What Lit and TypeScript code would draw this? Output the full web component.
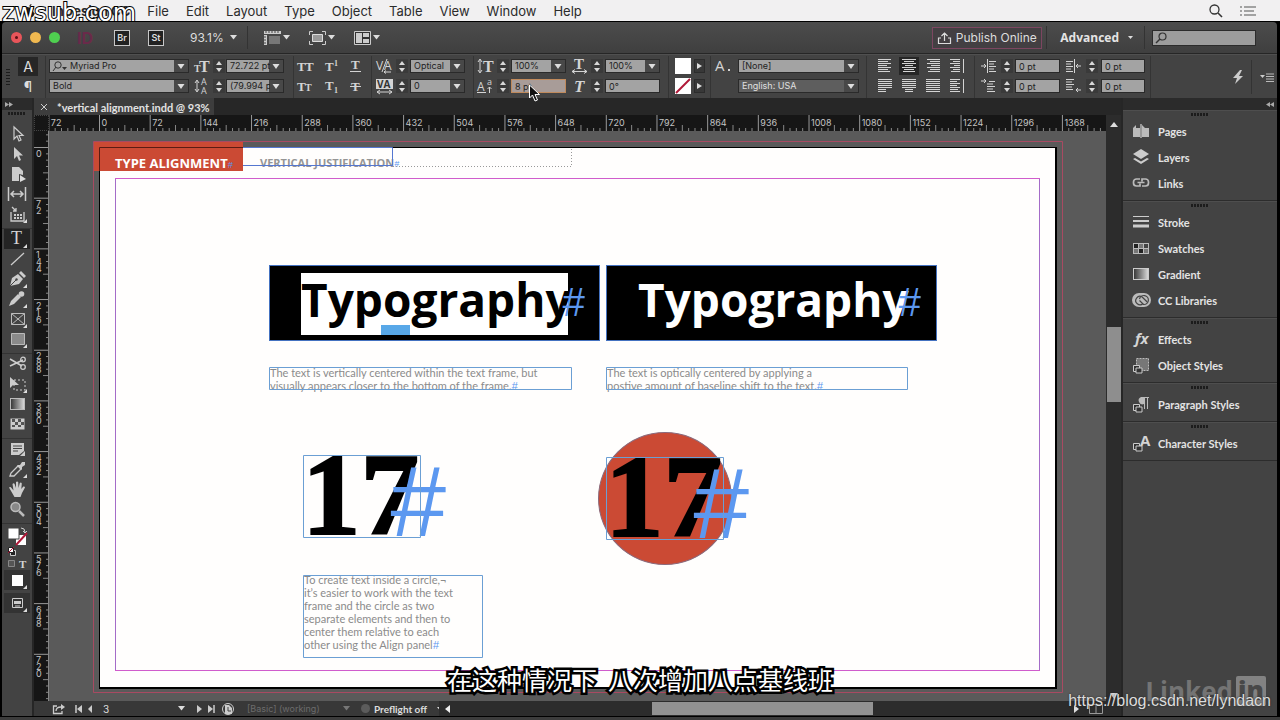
import { LitElement, html, svg, css, nothing } from "lit";
import { customElement } from "lit/decorators.js";
import { classMap } from "lit/directives/class-map.js";

const icon = (w: number, h: number, body: unknown) =>
  html`<svg class="icon" width=${w} height=${h} viewBox="0 0 ${w} ${h}" aria-hidden="true">${body}</svg>`;

const caret = icon(7, 5, svg`<path d="M0 0h7L3.500 4.500z" fill="#ddd"/>`);

/* ---------- Character panel glyphs ---------- */
const L = "#d4d4d4";
const glyph = {
  size: icon(16, 16, svg`<text x="5" y="14" class="serif" font-size="16">T</text><text x="0" y="14" class="serif" font-size="10">T</text>`),
  leading: icon(16, 16, svg`<text x="7" y="7" class="sans" font-size="9">A</text><text x="7" y="16" class="sans" font-size="9">A</text><path d="M3 3v10M1 5l2-3 2 3M1 11l2 3 2-3" stroke=${L} fill="none"/>`),
  caps: icon(17, 14, svg`<text x="0" y="12" class="serif" font-size="13">T</text><text x="8" y="12" class="serif" font-size="13">T</text>`),
  smallCaps: icon(17, 14, svg`<text x="0" y="12" class="serif" font-size="13">T</text><text x="8" y="12" class="serif" font-size="10">T</text>`),
  sup: icon(14, 14, svg`<text x="0" y="12" class="serif" font-size="13">T</text><text x="9" y="7" class="serif" font-size="8">1</text>`),
  sub: icon(14, 14, svg`<text x="0" y="11" class="serif" font-size="13">T</text><text x="9" y="14" class="serif" font-size="8">1</text>`),
  under: icon(12, 14, svg`<text x="1" y="10" class="serif" font-size="13">T</text><path d="M0 12.500h11" stroke=${L}/>`),
  strike: icon(12, 14, svg`<text x="1" y="12" class="serif" font-size="13">T</text><path d="M0 7.500h11" stroke=${L}/>`),
  kern: icon(17, 16, svg`<text x="0" y="12" class="sans" font-size="12">V</text><text x="8" y="12" class="sans" font-size="12">A</text><path d="M6 14L11 1M8 14h7M10 12.500L8 14l2 1.500" stroke=${L} fill="none"/>`),
  track: icon(17, 16, svg`<path d="M0 1h17v10H0z" fill=${L}/><text x="1" y="10" class="dark" font-size="10">VA</text><path d="M1 14h15M4 12l-3 2 3 2M13 12l3 2-3 2" stroke=${L} fill="none"/>`),
  vscale: icon(17, 16, svg`<text x="6" y="14" class="serif" font-size="16">T</text><path d="M3 2v12M1 4l2-3 2 3M1 12l2 3 2-3" stroke=${L} fill="none"/>`),
  shift: icon(17, 16, svg`<text x="0" y="13" class="sans" font-size="12">A</text><path d="M0 14.500h9M12.500 9v6M10.500 11l2-2 2 2" stroke=${L} fill="none"/><text x="10" y="7" class="sans" font-size="9">a</text>`),
  hscale: icon(17, 16, svg`<text x="3" y="11" class="serif" font-size="15">T</text><path d="M1 13.500h15M4 11.500l-3 2 3 2M13 11.500l3 2-3 2" stroke=${L} fill="none"/>`),
  skew: icon(17, 16, svg`<text x="3" y="14" class="serif it" font-size="17">T</text>`),
  charStyle: icon(18, 16, svg`<text x="0" y="13" class="sans" font-size="15">A</text><path d="M13 11h2v2h-2z" fill=${L}/>`),
};

const lines = (rows: number[][], extra: unknown = nothing) =>
  icon(16, 14, svg`${rows.map((r, i) => svg`<path d="M${r[0]} ${0.5 + i * 2}h${r[1]}" stroke=${L} stroke-width="1"/>`)}${extra}`);
const aligns = [
  ["Align left", lines([[1, 13], [1, 10], [1, 13], [1, 9], [1, 13], [1, 10], [1, 12]])],
  ["Align center", lines([[1, 14], [3, 10], [1, 14], [4, 8], [1, 14], [3, 10], [2, 12]])],
  ["Align right", lines([[2, 13], [5, 10], [2, 13], [6, 9], [2, 13], [5, 10], [3, 12]])],
  ["Align towards spine", lines([[1, 10], [4, 7], [1, 10], [5, 6], [1, 10], [4, 7], [2, 9]], svg`<path d="M14.500 0v14" stroke=${L}/>`)],
  ["Justify left", lines([[1, 14], [1, 14], [1, 14], [1, 14], [1, 14], [1, 8], [1, 8]])],
  ["Justify center", lines([[1, 14], [1, 14], [1, 14], [1, 14], [1, 14], [4, 8], [4, 8]])],
  ["Justify all", lines([[1, 14], [1, 14], [1, 14], [1, 14], [1, 14], [1, 14], [1, 14]])],
  ["Align away from spine", lines([[1, 10], [1, 7], [1, 10], [1, 7], [1, 10], [1, 8], [1, 10]], svg`<path d="M14.500 0v14" stroke=${L}/>`)],
] as const;

const indent = (arrow: string, x: number, bar: number) =>
  icon(15, 14, svg`<path d="M${x} 2.500h7M${x} 5h5M${x} 7.500h7M${x} 10h5M${x} 12.500h7" stroke=${L} stroke-width="1.200"/><path d="M${bar} 0v14" stroke=${L}/><path d=${arrow} stroke=${L} fill="none"/>`);
const indents = {
  left: indent("M0 7h5M3 5l2 2-2 2", 8, 6.5),
  right: indent("M15 7h-5M12 5l-2 2 2 2", 0, 8.5),
  first: icon(15, 14, svg`<path d="M0 2h5M3 0l2 2-2 2M8 2.500h6M6 5h6M6 7.500h8M6 10h6M6 12.500h8" stroke=${L} fill="none"/>`),
  last: icon(15, 14, svg`<path d="M0 .500h8M0 3h6M0 5.500h8M0 8h6M0 10.500h7M15 11h-5M12 9l-2 2 2 2" stroke=${L} fill="none"/>`),
};

/* ---------- Tools ---------- */
const corner = svg`<path d="M22 19v-4l-4 4z" fill="#ddd"/>`;
type Tool = { name: string; art: unknown; on?: boolean };
const toolGroups: Tool[][] = [
  [
    { name: "Selection", art: svg`<path d="M9 3v12l3-3 2 5 2-1-2-4.500h4z" fill="none" stroke="#ccc" stroke-width="1.200"/>` },
    { name: "Direct Selection", art: svg`<path d="M9 3v12l3-3 2 5 2-1-2-4.500h4z" fill="#ccc"/>` },
    { name: "Page", art: svg`<path d="M7 3h7l4 4v4l-4-1v7H7z" fill="#ccc"/><path d="M15 11v7l6-3z" fill="#ddd"/>` },
    { name: "Gap", art: svg`<path d="M3.500 3v14M20.500 3v14M6 10h12M9 7l-3 3 3 3M15 7l3 3-3 3" stroke="#ccc" stroke-width="1.500" fill="none"/>` },
    { name: "Content Collector", art: svg`<path d="M6 8v9h13V8M7 3l4 4M11 4v3H8" stroke="#ccc" stroke-width="1.300" fill="none"/><path d="M9 10h2v2H9zM12 10h2v2h-2zM15 10h2v2h-2zM9 13h2v2H9zM12 13h2v2h-2zM15 13h2v2h-2z" fill="#ccc"/>${corner}` },
  ],
  [
    { name: "Type", on: true, art: svg`<text x="6" y="15" class="serif thin" font-size="18">T</text>${corner}` },
    { name: "Line", art: svg`<path d="M6 16L19 4" stroke="#ccc" stroke-width="1.300"/>` },
    { name: "Pen", art: svg`<path d="M5 17l2-8 6-4 5 5-4 5z" fill="#ccc"/><path d="M14 4l2-2 5 5-2 2z" fill="#ccc"/><path d="M5 17l6-6" stroke="#444"/><circle cx="11.500" cy="10.500" r="1.200" fill="#444"/>${corner}` },
    { name: "Pencil", art: svg`<path d="M4 17l2-5 7-7 3 3-7 7z" fill="#ccc"/><circle cx="16.500" cy="5" r="2.800" fill="#ccc"/>${corner}` },
    { name: "Rectangle Frame", art: svg`<path d="M6.500 4.500h13v11h-13zM6.500 4.500l13 11M19.500 4.500l-13 11" stroke="#bbb" fill="none"/>${corner}` },
    { name: "Rectangle", art: svg`<path d="M6.500 4.500h13v11h-13z" fill="#8a8a8a" stroke="#bbb"/>${corner}` },
  ],
  [
    { name: "Scissors", art: svg`<path d="M5 5l12 7M5 12l13-6" stroke="#ccc" stroke-width="1.600"/><circle cx="18" cy="5.500" r="2.300" fill="none" stroke="#ccc" stroke-width="1.300"/><circle cx="18" cy="13" r="2.300" fill="none" stroke="#ccc" stroke-width="1.300"/>` },
    { name: "Free Transform", art: svg`<path d="M5 3v11l3-3h6z" fill="#ccc"/><path d="M9 6h11v10H9z" fill="none" stroke="#ccc" stroke-dasharray="2 2"/>${corner}` },
    { name: "Gradient Swatch", art: svg`<rect x="5.500" y="4.500" width="14" height="11" fill="url(#grad)" stroke="#bbb"/>` },
    { name: "Gradient Feather", art: svg`<rect x="5.500" y="4.500" width="14" height="11" fill="#ccc"/><path d="M7 5h3v3H7zM13 5h3v3h-3zM10 8h3v3h-3zM16 8h3v3h-3zM7 11h3v2H7zM13 11h3v2h-3z" fill="#555"/>` },
  ],
  [
    { name: "Note", art: svg`<path d="M6 4h13v8l-5 4H6z" fill="#ccc"/><path d="M8 7h9M8 9.500h9M8 12h5" stroke="#444"/><path d="M15 17l5-5v5z" fill="#ccc"/>` },
    { name: "Eyedropper", art: svg`<path d="M5 17l1-3 7-7 3 3-7 7z" fill="none" stroke="#ccc" stroke-width="1.300"/><path d="M12 6l3 0 2-3 3 0 0 3-3 2 0 3z" fill="#ccc"/>${corner}` },
    { name: "Hand", art: svg`<path d="M4 8.500q1.500-1 2.500.5l2 2.500L7.500 5q1.500-1.500 2.300.5L11 9V3q1.200-1.200 2.200 0L13.500 9l1.300-5q1.300-1 2 .5L16.300 10l2-2.500q1.500-.5 1.700 1L17 14l-1.500 4H9.500z" fill="#ccc"/>` },
    { name: "Zoom", art: svg`<circle cx="10.500" cy="8" r="4.500" fill="#888" stroke="#bbb" stroke-width="1.500"/><path d="M14 12l5 5" stroke="#bbb" stroke-width="2.500"/>` },
  ],
];

/* ---------- Side panels ---------- */
const stylesBadge = svg`<path d="M1.500 9.500h6v6h-6z" fill="#333" stroke="#ccc"/><path d="M4 12h6v5H4z" fill="#333" stroke="#ccc"/>`;
const panels: { name: string; art: unknown }[][] = [
  [
    { name: "Pages", art: svg`<path d="M1 6l3-3v3h4v9H1zM10 3l3 3h4v9h-7z" fill="#bbb"/><path d="M9 2v14" stroke="#eee" stroke-width="1"/>` },
    { name: "Layers", art: svg`<path d="M9 1l8 5-8 5-8-5z" fill="#ccc"/><path d="M1 11l8 5 8-5-2-1-6 3.500L3 10z" fill="#ccc"/>` },
    { name: "Links", art: svg`<path d="M8 5H4.500a3 3 0 0 0-3 3v1a3 3 0 0 0 3 3H8V9.500M10 12h3.500a3 3 0 0 0 3-3V8a3 3 0 0 0-3-3H10v2.500M5.500 8.500h7" fill="none" stroke="#bbb" stroke-width="1.700"/>` },
  ],
  [
    { name: "Stroke", art: svg`<path d="M1 3.500h16" stroke="#ccc"/><path d="M1 8h16" stroke="#ccc" stroke-width="2"/><path d="M1 13h16" stroke="#ccc" stroke-width="3"/>` },
    { name: "Swatches", art: svg`<path d="M1 4h16v11H1z" fill="#bbb"/><path d="M2 5h4v4H2zM7 10h4v4H7z" fill="#222"/><path d="M7 5h4v4H7zM2 10h4v4H2zM12 10h4v4h-4z" fill="#777"/><path d="M12 5h4v4h-4z" fill="#444"/>` },
    { name: "Gradient", art: svg`<rect x="1.500" y="3.500" width="15" height="11" fill="url(#grad)" stroke="#ccc"/>` },
    { name: "CC Libraries", art: svg`<rect x="0" y="2" width="19" height="14" rx="7" fill="#bbb"/><path d="M11 12.500a4.200 4.200 0 1 1-.8-6.500l5 5" fill="none" stroke="#444" stroke-width="1.200"/><path d="M7.500 8a4.500 4.500 0 1 1 4 5.500l-4-4" fill="none" stroke="#444" stroke-width="1.200"/>` },
  ],
  [
    { name: "Effects", art: svg`<text x="3" y="14" class="sans it" font-size="15">fx</text>` },
    { name: "Object Styles", art: svg`<rect x="4.500" y="2.500" width="12" height="12" fill="#777" stroke="#bbb" stroke-dasharray="2 1"/>${stylesBadge}` },
  ],
  [{ name: "Paragraph Styles", art: svg`<path d="M9 2h8v1h-1v11h-1V3h-2v11h-1V9a3.500 3.500 0 0 1-3-7z" fill="#bbb"/>${stylesBadge}` }],
  [{ name: "Character Styles", art: svg`<text x="8" y="12" class="sans" font-size="15">A</text>${stylesBadge}` }],
];

/* ---------- Rulers: 72 pt is 50.68 px at this zoom ---------- */
const STEP = 50.68;
const hRuler = () => {
  const out = [];
  for (let i = -1; i <= 20; i++) {
    const x = 50.5 + i * STEP;
    out.push(svg`<path d="M${x} 0v16" stroke="#999"/>`);
    if (i < 20) out.push(svg`<text x=${x + 2} y="11" class="tick">${Math.abs(i * 72)}</text>`);
    for (let k = 1; k < 8; k++) out.push(svg`<path d="M${x + (k * STEP) / 8} ${k === 4 ? 10 : 13}v6" stroke="#888"/>`);
  }
  return out;
};
const vRuler = () => {
  const out = [];
  for (let i = -1; i <= 11; i++) {
    const y = 16.5 + i * STEP;
    out.push(svg`<path d="M0 ${y}h15" stroke="#999"/>`);
    if (i >= 0 && i < 11)
      out.push(...String(i * 72).split("").map((d, n) => svg`<text x="2" y=${y + 9 + n * 7} class="tick">${d}</text>`));
    for (let k = 1; k < 8; k++) out.push(svg`<path d="M${k === 4 ? 9 : 12} ${y + (k * STEP) / 8}h6" stroke="#888"/>`);
  }
  return out;
};

const combo = (label: string, value: string, cls = "") =>
  html`<select class="combo ${cls}" aria-label=${label}><option>${value}</option></select>`;
const stepper = (label: string) => html`<span class="stepper">
  <button aria-label="Increase ${label}"><i class="up"></i></button>
  <button aria-label="Decrease ${label}"><i class="down"></i></button>
</span>`;
const field = (label: string, value: string, cls = "") =>
  html`<input class="field ${cls}" aria-label=${label} .value=${value} />`;
const glyphButton = (label: string, art: unknown) => html`<button class="plain" aria-label=${label}>${art}</button>`;

@customElement("app-root")
export class AppRoot extends LitElement {
  static styles = css`
    :host { display: block; }
    * { box-sizing: border-box; }
    button, select, input { font: inherit; color: inherit; margin: 0; border: 0; padding: 0; border-radius: 0; }
    button { background: none; display: inline-flex; align-items: center; justify-content: center; }
    .icon { display: block; flex: none; overflow: visible; }
    .serif { font-family: "Liberation Serif", serif; font-weight: 700; fill: #d4d4d4; }
    .thin { font-weight: 400; }
    .sans { font-family: "Open Sans", sans-serif; fill: #d4d4d4; }
    .dark { font-family: "Open Sans", sans-serif; font-weight: 700; fill: #333; }
    .it { font-style: italic; }
    .tick { font-family: "Inter", sans-serif; font-size: 9px; fill: #c4c4c4; }

    .screen {
      position: relative; display: flex; flex-direction: column; height: 100vh; overflow: hidden;
      padding: 0 3px 4px 2px; background: linear-gradient(#000, #000) top / 100% calc(100% - 3px) no-repeat #3c3c3c;
      font-family: "Inter", sans-serif; font-size: 10px; color: #ddd;
    }

    .menubar { flex: none; display: flex; align-items: center; gap: 17px; height: 21px; margin: 0 -3px 1px -2px; padding: 0 24px; background: #f1f0f1; color: #2b2b2b; font-size: 13px; }
    .menubar button { flex: none; }
    .brand { font-weight: 700; }
    .menubar .push { margin-left: auto; }

    .appbar { flex: none; display: flex; align-items: center; height: 32px; padding: 0 21px 0 9px; background: linear-gradient(#4c4c4c, #3f3f3f); border-bottom: 1px solid #262626; border-radius: 4px 4px 0 0; }
    .lights { display: flex; gap: 8px; }
    .light { width: 11px; height: 11px; border-radius: 50%; }
    .red { background: #e8555a; } .yellow { background: #f0b850; } .green { background: #4fcf50; }
    .red::after { content: ""; display: block; width: 3px; height: 3px; margin: 4px; border-radius: 50%; background: #5a1015; }
    .logo { width: 18px; margin-left: 17px; font-size: 16px; line-height: 18px; font-weight: 700; color: #6a2a4a; }
    .bridge { width: 16px; height: 16px; border: 1px solid #c8c8c8; background: #222; color: #ddd; font-size: 9px; font-weight: 600; margin-left: 19px; }
    .bridge + .bridge { margin-left: 18px; }
    .zoom { margin-left: 26px; font-size: 12px; gap: 6px; }
    .rule { flex: none; width: 1px; align-self: stretch; background: #333; margin: 4px 0; }
    .views { display: flex; gap: 19px; padding-left: 15px; }
    .zoom + .rule { margin-left: 10px; }
    .views button { gap: 2px; }
    .publish { height: 22px; width: 110px; gap: 5px; margin: 0 4px 0 auto; border: 1px solid #7c4660; color: #ddd; font-size: 12px; background: #433f42; }
    .workspace { font-family: "Open Sans", sans-serif; font-weight: 700; font-size: 12px; gap: 9px; padding: 0 14px 0 13px; margin-right: -3px; color: #e4e4e4; }
    .search { display: flex; align-items: center; width: 104px; height: 16px; margin-left: 7px; background: #9d9d9d; border: 1px solid #2c2c2c; padding-left: 2px; }
    .search input { flex: 1; min-width: 0; background: none; }

    .control { flex: none; display: flex; height: 44px; padding-top: 2px; background: #434343; border-top: 1px solid #505050; }
    .group { flex: none; display: grid; grid-template-rows: 20px 20px; align-items: center; border-left: 1px solid #343434; margin-top: -1px; }
    .handle { flex: none; width: 4px; height: 18px; margin: 12px 0 0 4px; background: repeating-linear-gradient(#1c1c1c 0 1px, #434343 1px 3px); }
    .modes { grid-template-columns: 20px; padding-left: 8px; margin-right: 7px; border: 0; }
    .modes button { height: 19px; color: #ddd; font-size: 14px; }
    .modes .on, .cell.on { background: #262626; }
    .font { grid-template-columns: 140px 5px 16px 3px 12px 1px 58px; padding-left: 3px; margin-right: 9px; }
    .case { grid-template-columns: 16px 13px 12px; column-gap: 12px; padding-left: 3px; margin-right: 9px; }
    .kern { grid-template-columns: 17px 3px 12px 2px 55px; padding-left: 4px; margin-right: 8px; }
    .scale { grid-template-columns: 17px 3px 12px 2px 55px 5px 17px 3px 12px 2px 55px; padding-left: 3px; margin-right: 8px; }
    .paint { grid-template-columns: 16px 3px 11px; padding-left: 6px; margin-right: 5px; }
    .named { grid-template-columns: 18px 5px 121px; padding-left: 4px; margin-right: 7px; }
    .align { grid-template-columns: repeat(4, 24px); padding-left: 6px; margin-right: 5px; }
    .indents { grid-template-columns: 15px 5px 12px 2px 45px 6px 15px 5px 12px 3px 44px; padding-left: 6px; margin-right: 5px; }
    .cell { height: 18px; width: 20px; justify-self: center; }
    .tail { flex: 1; display: flex; align-items: center; justify-content: flex-end; gap: 8px; border-left: 1px solid #343434; padding-right: 3px; margin-top: -1px; }
    .combo, .field { width: 100%; height: 14px; border: 1px solid #2a2a2a; background-color: #a3a3a3; color: #222; font-size: 9px; line-height: 12px; padding: 0 0 0 3px; }
    .combo {
      appearance: none; padding-right: 13px;
      background-image: url("data:image/svg+xml,%3Csvg xmlns='http://www.w3.org/2000/svg' width='14' height='12'%3E%3Cpath d='M0 0h14v12H0z' fill='%23484848'/%3E%3Cpath d='M3.500 4h7L7 9z' fill='%23ddd'/%3E%3C/svg%3E");
      background-repeat: no-repeat; background-position: right top;
    }
    .lens { padding-left: 20px; }
    .mid { background-color: #5e5e5e; color: #e0e0e0; }
    .active { border: 1px solid #c08a5c; background-color: #a89c98; }
    .withlens { display: grid; align-items: center; }
    .withlens > * { grid-area: 1 / 1; }
    .withlens .icon { margin-left: 3px; z-index: 1; pointer-events: none; }
    .stepper { display: flex; flex-direction: column; height: 14px; background: #3a3a3a; }
    .stepper button { height: 7px; width: 100%; }
    .up, .down { border: 3px solid transparent; }
    .up { border-top: 0; border-bottom: 4px solid #d8d8d8; }
    .down { border-bottom: 0; border-top: 4px solid #d8d8d8; }
    .plain { justify-content: flex-start; }
    .chip { width: 16px; height: 16px; background: #fff; }
    .flyout { height: 14px; background: #383838; border: 1px solid #2c2c2c; }

    .main { flex: 1; min-height: 0; display: flex; background: #262626; }
    .tools { flex: none; width: 30px; display: flex; flex-direction: column; background: #434343; }
    .strip { flex: none; height: 12px; background: #2b2b2b; display: flex; align-items: center; padding: 0 3px; }
    .strip.end { justify-content: flex-end; }
    .grip { width: 18px; height: 3px; margin: 2px auto 0; background: repeating-linear-gradient(90deg, #1c1c1c 0 2px, #434343 2px 3px); }
    .toolset { display: flex; flex-direction: column; padding-bottom: 4px; border-bottom: 1px solid #333; }
    .toolset.first { margin-top: 9px; }
    .toolset button { height: 20px; width: 26px; margin-left: 2px; }
    .toolset .on { background: #242424; }
    .colors { padding: 0 0 0 3px; }
    .modebtn { height: 20px; width: 26px; margin: 0 2px 3px; background: #333; }

    .doc { flex: 1; min-width: 0; display: grid; grid-template: 17px 16px minmax(0, 1fr) 15px / 15px minmax(0, 1fr) 15px; margin-left: 2px; background: #262626; }
    .tabs { grid-column: 1 / -1; background: #272727; display: flex; }
    .tab { display: flex; align-items: center; gap: 10px; width: 180px; padding: 1px 0 0 7px; background: #3d3d3d; color: #e2e2e2; font-family: "Lato", sans-serif; font-size: 11px; font-weight: 700; white-space: nowrap; }
    .origin { background: #161616; border: 1px dotted #444; }
    .hruler, .vruler { background: #161616; overflow: hidden; }
    .vruler { border-right: 1px solid #888; }
    .hruler svg, .vruler svg { display: block; }
    .vscroll { grid-row: 2 / 4; grid-column: 3; background: #2c2c2c; display: flex; flex-direction: column; align-items: center; padding: 7px 0 2px; }
    .vthumb { width: 14px; height: 75px; background: #8e8e8e; margin-top: 200px; }
    .vscroll .bottom { margin-top: auto; }
    .status { grid-column: 1 / -1; display: flex; align-items: center; background: #383838; min-width: 0; }
    .info { flex: none; width: 405px; display: grid; grid-template-columns: 19px 22px 12px 16px 75px 18px 12px 14px 25px 96px 18px 13px 60px; align-items: center; height: 15px; }
    .dim { color: #6c6c6c; font-size: 9px; }
    .preflight { font-family: "Lato", sans-serif; font-weight: 700; font-size: 10px; white-space: nowrap; display: flex; gap: 10px; align-items: center; }
    .hscroll { flex: 1; height: 15px; display: flex; align-items: center; background: #2c2c2c; padding: 0 15px 0 6px; }
    .hthumb { width: 221px; height: 13px; background: #929292; margin: 0 auto 0 202px; }

    .board { position: relative; overflow: hidden; background: #5a5a5a; color: #8b8b8b; font-family: "Open Sans", sans-serif; }
    .board > * { position: absolute; white-space: nowrap; }
    .page { left: 50px; top: 16px; width: 958px; height: 542px; background: #fffefd; border: 1px solid #000; border-width: 1px 2px 2px 1px; }
    .banner { left: 45px; top: 10px; width: 149px; height: 30px; background: #cb4a34; }
    .guides { left: 0; top: 0; }
    .head { top: 24px; font-size: 13px; line-height: 16px; font-weight: 700; }
    .h1 { left: 66px; color: #fff; }
    .h2 { left: 211px; color: #959595; font-size: 11px; }
    .mark { color: #5c98f0; font-family: "Liberation Sans", sans-serif; font-style: italic; font-weight: 400; }
    .head .mark { font-size: 9px; }
    .block { top: 134px; width: 331px; height: 76px; background: #000; border: 1px solid #4472c0; color: #fff; }
    .b1 { left: 220px; } .b2 { left: 557px; }
    .sel { left: 252px; top: 142px; width: 267px; height: 62px; background: #fff; }
    .type { top: 136px; font-size: 46px; line-height: 64px; font-weight: 700; }
    .t1 { left: 252px; color: #000; } .t2 { left: 589px; color: #fff; }
    .m1, .m2 { top: 148px; font-size: 40px; line-height: 46px; }
    .m1 { left: 513px; } .m2 { left: 849px; }
    .space { left: 332px; top: 194px; width: 29px; height: 10px; background: #58a8e8; }
    .copy { font-size: 11px; line-height: 13px; margin: 0; font-family: "Lato", sans-serif; }
    .c1 { left: 221px; top: 235px; } .c2 { left: 558px; top: 235px; } .c3 { left: 255px; top: 442px; }
    .disc { left: 549px; top: 301px; width: 134px; height: 133px; border-radius: 50%; background: #cb4a34; border: 1px solid #8a6a7c; }
    .num { font-family: "Liberation Serif", serif; font-weight: 700; font-size: 117px; line-height: 120px; color: #000; -webkit-text-stroke: 2px #000; }
    .n1 { left: 253px; top: 304px; } .n2 { left: 556px; top: 306px; }
    .hash { font-size: 100px; line-height: 110px; }
    .k1 { left: 340px; top: 315px; } .k2 { left: 643px; top: 317px; }

    .dock { flex: none; width: 154px; display: flex; flex-direction: column; background: #434343; margin-left: 2px; }
    .panelset { padding-bottom: 4px; border-bottom: 1px solid #2c2c2c; border-top: 1px solid #4e4e4e; }
    .panelset .rows { display: flex; flex-direction: column; padding-top: 2px; }
    .panelset button { height: 26px; justify-content: flex-start; gap: 8px; padding-left: 9px; font-family: "Lato", sans-serif; font-weight: 700; font-size: 11px; color: #e4e4e4; }

    .subtitle { position: absolute; left: 0; right: 0; bottom: 23px; margin: 0; text-align: center; white-space: pre; font-family: "Noto Sans CJK SC", sans-serif; font-size: 25px; line-height: 36px; color: #fff; -webkit-text-stroke: 5px #000; paint-order: stroke fill; }
    .site { position: absolute; left: 2px; top: 0; font-family: "DejaVu Sans", sans-serif; font-size: 24px; line-height: 26px; color: #fff; -webkit-text-stroke: 2px #000; paint-order: stroke fill; }
    .url { position: absolute; right: 9px; bottom: 9px; font-family: "Liberation Sans", sans-serif; font-size: 16px; line-height: 20px; color: #dcdcdc; text-shadow: 0 0 2px #222; }
    .linkedin { position: absolute; right: 14px; bottom: 14px; display: flex; align-items: center; gap: 3px; font-family: "Open Sans", sans-serif; font-weight: 700; font-size: 26px; line-height: 30px; color: #747474; }
    .linkedin b { width: 30px; height: 30px; line-height: 28px; text-align: center; background: #828282; color: #484848; border-radius: 2px; }
    .pointer { position: absolute; left: 528px; top: 84px; }
  `;

  private controls() {
    return html`<div class="control">
      <div class="handle"></div>
      <div class="group modes">
        <button class="on" aria-label="Character formatting">A</button>
        <button aria-label="Paragraph formatting">¶</button>
      </div>
      <div class="group font">
        <span class="withlens">${icon(15, 10, svg`<circle cx="6" cy="4" r="3.200" fill="none" stroke="#333"/><path d="M4 6L1 10" stroke="#333"/><path d="M10 6h5l-2.500 3z" fill="#333"/>`)}${combo("Font family", "Myriad Pro", "lens")}</span><i></i>
        ${glyph.size}<i></i>${stepper("font size")}<i></i>${combo("Font size", "72.722 pt")}
        ${combo("Font style", "Bold")}<i></i>${glyph.leading}<i></i>${stepper("leading")}<i></i>${combo("Leading", "(79.994 pt)")}
      </div>
      <div class="group case">
        ${glyphButton("All caps", glyph.caps)}${glyphButton("Superscript", glyph.sup)}${glyphButton("Underline", glyph.under)}
        ${glyphButton("Small caps", glyph.smallCaps)}${glyphButton("Subscript", glyph.sub)}${glyphButton("Strikethrough", glyph.strike)}
      </div>
      <div class="group kern">
        ${glyph.kern}<i></i>${stepper("kerning")}<i></i>${combo("Kerning", "Optical")}
        ${glyph.track}<i></i>${stepper("tracking")}<i></i>${combo("Tracking", "0")}
      </div>
      <div class="group scale">
        ${glyph.vscale}<i></i>${stepper("vertical scale")}<i></i>${combo("Vertical scale", "100%")}<i></i>
        ${glyph.hscale}<i></i>${stepper("horizontal scale")}<i></i>${combo("Horizontal scale", "100%")}
        ${glyph.shift}<i></i>${stepper("baseline shift")}<i></i>${field("Baseline shift", "8 pt", "active")}<i></i>
        ${glyph.skew}<i></i>${stepper("skew")}<i></i>${field("Skew", "0°")}
      </div>
      <div class="group paint">
        <button class="chip" aria-label="Fill"></button><i></i><button class="flyout" aria-label="Fill options">${icon(5, 8, svg`<path d="M0 1l5 3-5 3z" fill="#ddd"/>`)}</button>
        <button class="chip" aria-label="Stroke">${icon(16, 16, svg`<path d="M1 15L15 1" stroke="#b01838" stroke-width="2"/>`)}</button><i></i><button class="flyout" aria-label="Stroke options">${icon(5, 8, svg`<path d="M0 1l5 3-5 3z" fill="#ddd"/>`)}</button>
      </div>
      <div class="group named">
        ${glyph.charStyle}<i></i>${combo("Character style", "[None]")}<i></i><i></i>${combo("Language", "English: USA", "mid")}
      </div>
      <div class="group align">
        ${aligns.map(([name, art], i) => html`<button class=${classMap({ cell: true, on: i === 1 })} aria-label=${name}>${art}</button>`)}
      </div>
      <div class="group indents">
        ${indents.left}<i></i>${stepper("left indent")}<i></i>${field("Left indent", "0 pt")}<i></i>
        ${indents.right}<i></i>${stepper("right indent")}<i></i>${field("Right indent", "0 pt")}
        ${indents.first}<i></i>${stepper("first line indent")}<i></i>${field("First line indent", "0 pt")}<i></i>
        ${indents.last}<i></i>${stepper("last line indent")}<i></i>${field("Last line indent", "0 pt")}
      </div>
      <div class="tail">
        <button aria-label="Quick apply">${icon(10, 14, svg`<path d="M7 0L0 8h4l-2 6 8-8H6l3-6z" fill="#ccc"/>`)}</button>
        <span class="rule"></span>
        <button aria-label="Panel menu">${icon(14, 9, svg`<path d="M0 2h5L2.500 5z" fill="#ccc"/><path d="M6 1h8M6 3.500h8M6 6h8M6 8.500h8" stroke="#bbb"/>`)}</button>
      </div>
    </div>`;
  }

  private board() {
    return html`<div class="board">
      <div class="page"></div>
      <div class="banner"></div>
      <div class="block b1"></div><div class="block b2"></div>
      <div class="sel"></div>
      <div class="disc"></div>
      <div class="type t1">Typography</div><div class="type t2">Typography</div>
      <div class="space"></div>
      <span class="mark m1">#</span><span class="mark m2">#</span>
      <div class="num n1">17</div><div class="num n2">17</div>
      <span class="mark hash k1">#</span><span class="mark hash k2">#</span>
      <div class="head h1">TYPE ALIGNMENT<span class="mark">#</span></div>
      <div class="head h2">VERTICAL JUSTIFICATION<span class="mark">#</span></div>
      <p class="copy c1">The text is vertically centered within the text frame, but<br />visually appears closer to the bottom of the frame.<span class="mark">#</span></p>
      <p class="copy c2">The text is optically centered by applying a<br />postive amount of baseline shift to the text.<span class="mark">#</span></p>
      <p class="copy c3">To create text inside a circle,¬<br />it’s easier to work with the text<br />frame and the circle as two<br />separate elements and then to<br />center them relative to each<br />other using the Align panel<span class="mark">#</span></p>
      <svg class="guides" width="1058" height="570" fill="none" aria-hidden="true">
        <path d="M44.500 10.500h969v551h-969z" stroke="#a84a62"/>
        <path d="M50.500 40V16.500h145" stroke="#5a1c14"/>
        <path d="M66.500 47.500v492M990.500 47.500v492" stroke="#a46cc8"/>
        <path d="M66 47.500h925M66 539.500h925" stroke="#d05ccc"/>
        <path d="M194 16.500h149.500v18H194" stroke="#5577d0"/>
        <path d="M344 35.500h178.500V17" stroke="#999" stroke-dasharray="1 2"/>
        <path d="M220.500 236.500h302v22h-302zM557.500 236.500h301v22h-301zM254.500 324.500h117v82h-117zM557.500 326.500h117v82h-117zM254.500 444.500h179v82h-179z" stroke="#6b9fd4"/>
      </svg>
    </div>`;
  }

  render() {
    return html`<div class="screen">
      <nav class="menubar">
        ${icon(11, 13, svg`<path d="M7.500 0c0 1.500-1 2.500-2.200 2.600C5.200 1.300 6.200.3 7.500 0zM5.500 3.500c.8 0 1.300-.5 2.500-.5 1 0 1.800.5 2.400 1.300-2 1.200-1.700 4 .4 4.900C10 11.500 9 13 8 13c-.8 0-1.200-.5-2.300-.5S4.300 13 3.500 13C1.800 13 0 9.500 0 7c0-2.500 1.600-4 3.200-4 1 0 1.600.5 2.300.5z" fill="#222"/>`)}
        ${["InDesign CC", "File", "Edit", "Layout", "Type", "Object", "Table", "View", "Window", "Help"].map((m, i) => html`<button class=${i ? "" : "brand"}>${m}</button>`)}
        <button class="push" aria-label="Spotlight">${icon(14, 14, svg`<circle cx="5.500" cy="5.500" r="4.500" fill="none" stroke="#333" stroke-width="1.300"/><path d="M9 9l4 4" stroke="#333" stroke-width="1.600"/>`)}</button>
        <button aria-label="Notification Center">${icon(16, 10, svg`<path d="M0 1h2M4 1h12M0 5h2M4 5h10M0 9h2M4 9h12" stroke="#888" stroke-width="1.300"/>`)}</button>
      </nav>
      <header class="appbar">
        <div class="lights"><span class="light red"></span><span class="light yellow"></span><span class="light green"></span></div>
        <span class="logo">ID</span>
        <button class="bridge">Br</button><button class="bridge">St</button>
        <button class="zoom">93.1% ${caret}</button>
        <span class="rule"></span>
        <div class="views">
          <button aria-label="View options">${icon(18, 15, svg`<path d="M1 1h17v3H1zM1 5h3v10H1z" fill="#ccc"/><path d="M6 6h11v8H6z" fill="#777"/><path d="M3 1v2M6 1v2M9 1v2M12 1v2M15 1v2M1 7h2M1 10h2M1 13h2" stroke="#444"/>`)}${caret}</button>
          <button aria-label="Screen mode">${icon(17, 14, svg`<path d="M3.500 3.500h10v7h-10z" fill="#999" stroke="#ddd"/><path d="M.500 4V.500H4M13 .500h3.500V4M16.500 10v3.500H13M4 13.500H.500V10" fill="none" stroke="#ccc"/>`)}${caret}</button>
          <button aria-label="Arrange documents">${icon(17, 14, svg`<path d="M.500 .500h16v13H.500z" fill="#333" stroke="#ccc"/><path d="M2 2h6v10H2zM9 2h6v4H9zM9 8h6v4H9z" fill="#ccc"/>`)}${caret}</button>
        </div>
        <button class="publish">${icon(13, 12, svg`<path d="M3 6H.500v5.500h12V6H10M6.500 9V1M3.500 4l3-3 3 3" fill="none" stroke="#ddd" stroke-width="1.200"/>`)}Publish Online</button>
        <span class="rule"></span>
        <button class="workspace">Advanced ${icon(5, 3, svg`<path d="M0 0h5L2.500 3z" fill="#ddd"/>`)}</button>
        <span class="rule"></span>
        <label class="search">${icon(12, 12, svg`<circle cx="7.500" cy="4.500" r="3.500" fill="none" stroke="#333" stroke-width="1.200"/><path d="M5 7L1 11" stroke="#333" stroke-width="1.500"/>`)}<input aria-label="Search" /></label>
      </header>
      ${this.controls()}
      <div class="main">
        <aside class="tools">
          <div class="strip">${icon(8, 5, svg`<path d="M0 0l4 2.500L0 5zM4 0l4 2.500L4 5z" fill="#aaa"/>`)}</div>
          <div class="grip"></div>
          ${toolGroups.map((g, i) => html`<div class=${classMap({ toolset: true, first: i === 0 })}>
            ${g.map((t) => html`<button class=${t.on ? "on" : ""} aria-label=${t.name}><svg class="icon" width="24" height="20" viewBox="0 0 24 20" aria-hidden="true"><defs><linearGradient id="grad"><stop stop-color="#333" /><stop offset="1" stop-color="#ddd" /></linearGradient></defs>${t.art}</svg></button>`)}
          </div>`)}
          <div class="colors">${icon(24, 46, svg`
            <path d="M11 11h10v10H11z" fill="#fff"/><path d="M11 21L22 9" stroke="#b01838" stroke-width="2"/>
            <path d="M3 4h11v11H3z" fill="#fff" stroke="#444"/><path d="M16 4q4 0 4 4M18 7l2 2 2-2" stroke="#ccc" fill="none"/>
            <path d="M5.500 26.500h5v5h-5z" fill="#222" stroke="#ccc"/><path d="M3.500 23.500h5v5h-5z" fill="#fff" stroke="#222"/><path d="M3 29l6-6" stroke="#b01838"/>
            <path d="M3.500 36.500h6v6h-6z" fill="#555" stroke="#888"/><text x="14" y="44" class="serif" font-size="11">T</text>`)}</div>
          <button class="modebtn" aria-label="Apply color">${icon(24, 20, svg`<path d="M7 5h11v11H7z" fill="#fff"/>${corner}`)}</button>
          <button class="modebtn" aria-label="View mode">${icon(24, 20, svg`<path d="M7.500 5.500h10v9h-10z" fill="#333" stroke="#ccc"/><path d="M9 8h7v3H9z" fill="#ccc"/><path d="M10 13h5" stroke="#ccc"/>${corner}`)}</button>
        </aside>
        <main class="doc">
          <div class="tabs"><div class="tab">${icon(6, 6, svg`<path d="M0 0l6 6M6 0L0 6" stroke="#ccc"/>`)}<span>*vertical alignment.indd @ 93%</span></div></div>
          <div class="origin"></div>
          <div class="hruler"><svg width="100%" height="16">${hRuler()}</svg></div>
          <div class="vscroll">${icon(8, 5, svg`<path d="M0 5h8L4 0z" fill="#ddd"/>`)}<div class="vthumb"></div><span class="bottom">${icon(8, 6, svg`<path d="M0 0h8L4 6z" fill="#ddd"/>`)}</span></div>
          <div class="vruler"><svg width="15" height="100%">${vRuler()}</svg></div>
          ${this.board()}
          <div class="status">
            <div class="info">
              <i></i>${icon(12, 10, svg`<path d="M4 2H.500v7.500H9V7M3 7q0-4 5-4" fill="none" stroke="#ccc" stroke-width="1.300"/><path d="M8 0l4 3-4 3z" fill="#ccc"/>`)}
              ${icon(7, 8, svg`<path d="M1 0v8" stroke="#ccc" stroke-width="1.500"/><path d="M7 0v8L2 4z" fill="#ccc"/>`)}
              ${icon(6, 8, svg`<path d="M5 0v8L1 4z" fill="#ccc"/>`)}<span>3</span>${caret}
              ${icon(6, 8, svg`<path d="M1 0v8l5-4z" fill="#ccc"/>`)}${icon(7, 8, svg`<path d="M0 0v8l5-4z" fill="#ccc"/><path d="M6 0v8" stroke="#ccc" stroke-width="1.500"/>`)}
              ${icon(13, 12, svg`<circle cx="6" cy="6" r="5.500" fill="none" stroke="#ccc"/><path d="M3 2h4l3 3v6H3z" fill="#ccc"/><path d="M6 4v4h3" stroke="#444" fill="none"/>`)}
              <span class="dim">[Basic] (working)</span>${icon(7, 5, svg`<path d="M0 0h7L3.500 4.500z" fill="#777"/>`)}
              ${icon(9, 9, svg`<circle cx="4.500" cy="4.500" r="4.500" fill="#5c5c5c"/>`)}
              <span class="preflight">Preflight off ${icon(5, 3, svg`<path d="M0 0h5L2.500 3z" fill="#ddd"/>`)}</span>
            </div>
            <div class="hscroll">${icon(5, 8, svg`<path d="M5 0v8L0 4z" fill="#eee"/>`)}<div class="hthumb"></div>${icon(32, 10, svg`<path d="M0 1v8l5-4z" fill="#ddd"/><path d="M15.500 .500h13v9h-13zM22 0v10" fill="none" stroke="#999"/>`)}</div>
          </div>
        </main>
        <aside class="dock">
          <div class="strip end">${icon(8, 5, svg`<path d="M4 0L0 2.500 4 5zM8 0L4 2.500 8 5z" fill="#aaa"/>`)}</div>
          ${panels.map((g) => html`<section class="panelset"><div class="grip"></div><div class="rows">
            ${g.map((p) => html`<button><svg class="icon" width="18" height="18" viewBox="0 0 18 18" aria-hidden="true">${p.art}</svg>${p.name}</button>`)}
          </div></section>`)}
        </aside>
      </div>
      <div class="pointer">${icon(12, 18, svg`<path d="M1.500 1v13l3-3 2.500 6 2.500-1-2.500-5.500h4.500z" fill="#111" stroke="#fff"/>`)}</div>
      <div class="linkedin">Linked<b>in</b></div>
      <div class="url">https://blog.csdn.net/lyndacn</div>
      <p class="subtitle">在这种情况下  八次增加八点基线班</p>
      <div class="site">zwsub.com</div>
    </div>`;
  }
}
